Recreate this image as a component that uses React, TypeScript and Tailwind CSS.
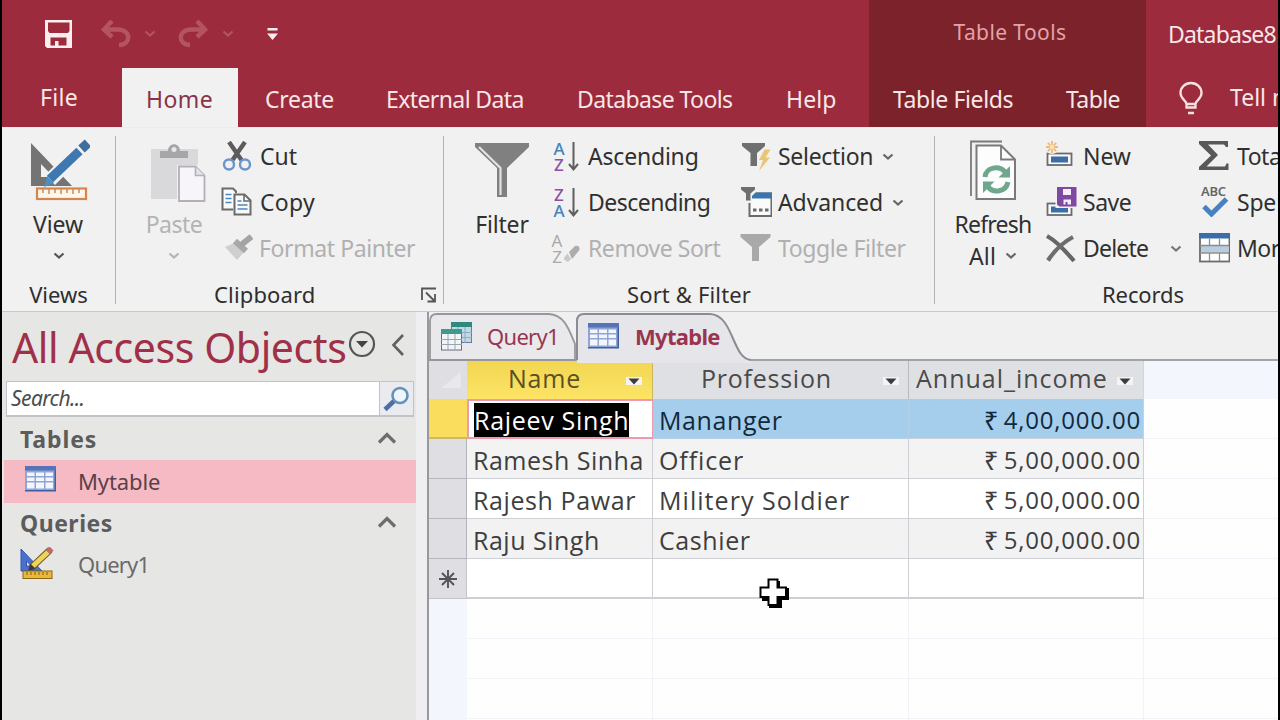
import type { ReactNode } from 'react';

/* ---------- small helpers ---------- */

function Chevron({ className = '' }: { className?: string }) {
  return (
    <svg className={`h-[8px] w-[12px] shrink-0 ${className}`} viewBox="0 0 12 8" fill="none" stroke="currentColor" strokeWidth="2.200">
      <path d="M1.500 1.500 6 5.500 10.500 1.500" />
    </svg>
  );
}

function Icon({ children, w = 32, h = 32 }: { children: ReactNode; w?: number; h?: number }) {
  return (
    <svg width={w} height={h} viewBox={`0 0 ${w} ${h}`} fill="none" className="shrink-0">
      {children}
    </svg>
  );
}

function Command({ icon, label, className = '', arrow }: { icon: ReactNode; label: string; className?: string; arrow?: string }) {
  return (
    <div className="flex h-[46px] items-center">
      {icon}
      <span className={`ml-[6px] pb-[2px] ${className}`}>{label}</span>
      {arrow && <Chevron className={arrow} />}
    </div>
  );
}

function Group({ width, children, footer }: { width: string; children: ReactNode; footer: ReactNode }) {
  return (
    <div className={`flex h-[183px] shrink-0 flex-col ${width}`}>
      <div className="flex h-[151px]">{children}</div>
      {footer}
    </div>
  );
}

const Separator = () => <div className="mt-[8px] h-[168px] w-px shrink-0 bg-[#b4b4b4]" />;

/* ---------- ribbon icons ---------- */

const ViewIcon = () => (
  <Icon w={62} h={62}>
    <path fillRule="evenodd" d="M3 4 44 47H3ZM13 25V38H25.500Z" fill="#747474" />
    <path d="M57 6 22 41" stroke="#f1f1f1" strokeWidth="14" />
    <path d="M51.500 12 22 40" stroke="#3d78b0" strokeWidth="9" />
    <path d="M60 4 53.500 10" stroke="#3d6e9c" strokeWidth="9.500" />
    <path d="M19 37 26 44 16 48Z" fill="#4f8cc0" />
    <rect x="9" y="49.500" width="49" height="10.500" fill="#fff7ec" stroke="#d3864f" strokeWidth="2.200" />
    <path d="M15 50v4M21 50v5M27 50v4M33 50v5M39 50v4M45 50v5M51 50v4" stroke="#d3864f" strokeWidth="1.500" />
  </Icon>
);

const PasteIcon = () => (
  <Icon w={64} h={62}>
    <path d="M9 9H56V59H9Z" fill="#d9d9dc" />
    <path d="M18 11H26C26 2 38 2 38 11H46V18H18Z" fill="#a6a6a8" />
    <circle cx="32" cy="9.500" r="2.500" fill="#e8e8e8" />
    <path d="M35 25H55L65 35V62H35Z" fill="#f1f1f1" />
    <path d="M37 26.500H53.500L62.500 35.500V61H37Z" fill="#f7f4fa" stroke="#b3afb8" strokeWidth="1.800" />
    <path d="M53.500 26.500V35.500H62.500" fill="#e4e4e8" stroke="#b3afb8" strokeWidth="1.600" />
  </Icon>
);

const CutIcon = () => (
  <Icon>
    <path d="M8 1 20.500 19M24 1 11.500 19" stroke="#5c5c5c" strokeWidth="4.400" />
    <circle cx="8" cy="23.500" r="5" stroke="#6c93cc" strokeWidth="2.400" />
    <circle cx="24" cy="23.500" r="5" stroke="#6c93cc" strokeWidth="2.400" />
  </Icon>
);

const CopyIcon = () => (
  <Icon>
    <path d="M1.500 1.500H12L15 4.500V22.500H1.500Z" fill="#fafafa" stroke="#6b6b6b" strokeWidth="2" />
    <path d="M4.500 7.500h6M4.500 11.500h6M4.500 15.500h6" stroke="#4b86c4" strokeWidth="1.700" />
    <path d="M12 6H24L31 13V30H12Z" fill="#f1f1f1" />
    <path d="M13.500 7.500H23.500L29.500 13.500V27.500H13.500Z" fill="#fafafa" stroke="#6b6b6b" strokeWidth="2" />
    <path d="M23 7.500V14H29.500" stroke="#6b6b6b" strokeWidth="1.600" />
    <path d="M16.500 14h4M16.500 18h10M16.500 22h10" stroke="#4b86c4" strokeWidth="1.700" />
  </Icon>
);

const PainterIcon = () => (
  <Icon>
    <path d="M4 14 13 10 23 19 16 27Z" fill="#cfcfcf" />
    <path d="M14 8 25 18" stroke="#a8a8a8" strokeWidth="6" />
    <path d="M20 12 30.500 3.500" stroke="#a4a4a4" strokeWidth="6" />
  </Icon>
);

const FilterIcon = () => (
  <Icon w={56} h={58}>
    <path d="M1 2H55V6L33 27V56H23V27L1 6Z" fill="#808080" />
    <path d="M5 6 26.500 27V54" stroke="#e2e2e2" strokeWidth="2.200" />
  </Icon>
);

/* stacked letters beside a downward arrow */
function SortIcon({ top, bottom, a, b }: { top: string; bottom: string; a: string; b: string }) {
  return (
    <div className="flex h-8 w-8 shrink-0 pl-[2px]">
      <div className="flex w-[14px] flex-col items-center text-[17px] leading-[16px] font-medium">
        <span className={a}>{top}</span>
        <span className={b}>{bottom}</span>
      </div>
      <svg width="14" height="32" viewBox="0 0 14 32" fill="none" stroke="#5f5f5f" strokeWidth="2" className="ml-[1px]">
        <path d="M6.500 1V28M2 23 6.500 28.500 11 23" />
      </svg>
    </div>
  );
}

const RemoveSortIcon = () => (
  <div className="flex h-8 w-8 shrink-0 text-[#a9a9a9]">
    <div className="flex w-[14px] flex-col items-center text-[17px] leading-[16px]">
      <span>A</span>
      <span>Z</span>
    </div>
    <svg width="18" height="32" viewBox="0 0 18 32">
      <path d="M5 19 11 13Q16 12 15.500 17L8 26Z" fill="#adadad" />
      <path d="M3.500 20.500 7 26 4 29 -1 26Z" fill="#c9c9c9" />
    </svg>
  </div>
);

const SelectionIcon = () => (
  <Icon>
    <path d="M2 2H25V5L17 12V25H10.500V12L2 5Z" fill="#6f6f6f" />
    <path d="M24 7H31L27.500 15H32L19 32 22.500 20H18Z" fill="#f1f1f1" />
    <path d="M24.500 8.500H30.500L25.500 16.500H30L19 30 23 19H19Z" fill="#ebc672" />
  </Icon>
);

const AdvancedIcon = () => (
  <Icon>
    <rect x="9.500" y="6.500" width="22" height="22.500" fill="#fafafa" stroke="#6b6b6b" strokeWidth="2" />
    <rect x="11" y="5.500" width="21" height="6" fill="#3a75ab" />
    <path d="M1 0H16V5L12 9V16H6V9L1 5Z" fill="#f1f1f1" />
    <path d="M1 0H15V2.500L10.500 6.500V13.500H6V6.500L1 2.500Z" fill="#6f6f6f" />
    <path d="M13 23h3.500M19 23h3.500M25 23h3.500" stroke="#6b6b6b" strokeWidth="3" />
  </Icon>
);

const ToggleIcon = () => (
  <Icon>
    <path d="M0.500 1H30.500V4L19 14V28H12V14L0.500 4Z" fill="#a9a9a9" />
  </Icon>
);

const RefreshIcon = () => (
  <Icon w={48} h={62}>
    <path d="M2 57V2.500H33" stroke="#7a7a7a" strokeWidth="1.800" />
    <path d="M7.500 6.500H32L46 20.500V60H7.500Z" fill="#fdfdfd" stroke="#7a7a7a" strokeWidth="2" />
    <path d="M32 6.500V20.500H46" stroke="#7a7a7a" strokeWidth="1.800" />
    <path d="M16 38C17 28 30 26 36 33" stroke="#6da78c" strokeWidth="5" />
    <path d="M41 27V38.500H29.500Z" fill="#6da78c" />
    <path d="M39 43C37 53 24 55 19 47.500" stroke="#6da78c" strokeWidth="5" />
    <path d="M14 54V42.500H25.500Z" fill="#6da78c" />
  </Icon>
);

const NewIcon = () => (
  <Icon>
    <rect x="2.500" y="12.500" width="24" height="11.500" fill="#fafafa" stroke="#6b6b6b" strokeWidth="1.800" />
    <rect x="6" y="15.500" width="17" height="6" fill="#3a6ea6" />
    <circle cx="7" cy="6" r="7" fill="#f1f1f1" />
    <path d="M7 0V12M1 6H13M2.800 1.800 11.200 10.200M11.200 1.800 2.800 10.200" stroke="#efb877" strokeWidth="1.800" />
    <circle cx="7" cy="6" r="2.400" fill="#f7e0b8" />
  </Icon>
);

const SaveIcon = () => (
  <Icon>
    <rect x="2.500" y="16.500" width="24" height="11.500" fill="#fafafa" stroke="#6b6b6b" strokeWidth="1.800" />
    <rect x="6" y="19.500" width="17" height="6" fill="#3a6ea6" />
    <path d="M10.500 0H32V21H10.500Z" fill="#f1f1f1" />
    <path d="M12 0H31.500V19.500H14.500L12 17.500Z" fill="#7e48a3" />
    <rect x="18" y="2" width="8" height="6" fill="#f4eef8" />
    <path d="M18.500 12.500H26V17.500H22.500V15H20.500V17.500H18.500Z" fill="#f4eef8" />
  </Icon>
);

const DeleteIcon = () => (
  <Icon>
    <path d="M2 3Q13 9 29 28" stroke="#666" strokeWidth="4.200" />
    <path d="M28 4Q13 12 3 27.500" stroke="#6d6d6d" strokeWidth="4.200" />
  </Icon>
);

const SigmaIcon = () => (
  <Icon>
    <path d="M1 0H30V6H28L26 3.500H10L20 14 8.500 25.500H27L28.500 22.500H30.500V29H1V26L13 14.500 1 3Z" fill="#585858" />
  </Icon>
);

const SpellIcon = () => (
  <div className="flex h-8 w-8 shrink-0 flex-col">
    <span className="pl-[3px] text-[13px] leading-[9px] font-semibold tracking-[-0.3px] text-[#666]">ABC</span>
    <svg width="32" height="21" viewBox="0 0 32 21" fill="none">
      <path d="M6 10.500 13.500 18 28.500 3" stroke="#4781bf" strokeWidth="5" />
    </svg>
  </div>
);

const MoreIcon = () => (
  <Icon>
    <rect x="2" y="1" width="29.500" height="27.500" fill="#fff" stroke="#6b6b6b" strokeWidth="1.800" />
    <rect x="1" y="0" width="31.500" height="5.500" fill="#3a6ea6" />
    <rect x="3" y="13" width="27.500" height="6.500" fill="#b8cde0" />
    <path d="M11.500 6V13M21.500 6V13M11.500 20V28M21.500 20V28M2 12.500H31M2 20H31" stroke="#8d8d8d" strokeWidth="1.300" />
  </Icon>
);

/* ---------- object icons ---------- */

const TableIcon = () => (
  <svg width="34" height="28" viewBox="0 0 34 28" fill="none" className="shrink-0">
    <rect x="1" y="1" width="31" height="25.500" fill="#3f5fa3" />
    <rect x="1" y="1" width="29.500" height="24" fill="#8fa5d6" />
    <rect x="1" y="1" width="31" height="4.500" fill="#5673b8" />
    <path d="M3 7.500h7.500v3.500H3zM12 7.500h8v3.500h-8zM21.500 7.500h7.500v3.500h-7.500zM3 12.500h7.500v3.500H3zM12 12.500h8v3.500h-8zM21.500 12.500h7.500v3.500h-7.500zM3 17.500h7.500v6H3zM12 17.500h8v6h-8zM21.500 17.500h7.500v6h-7.500z" fill="#f3f6fd" />
  </svg>
);

const QueryObjectIcon = () => (
  <svg width="34" height="34" viewBox="0 0 34 34" fill="none" className="shrink-0">
    <path fillRule="evenodd" d="M1 2 22 24H1ZM6.500 14V19H11.500Z" fill="#4a70cf" stroke="#3555ad" />
    <path d="M30 3 12 20" stroke="#6f5b23" strokeWidth="7" />
    <path d="M28 5 13 19" stroke="#f0d35a" strokeWidth="5" />
    <path d="M31.500 1.500 28 5" stroke="#c4686f" strokeWidth="6" />
    <path d="M10 17 15.500 22 8 24Z" fill="#3c3c3c" />
    <rect x="3" y="24" width="29" height="7.500" fill="#e9b93c" stroke="#8e6716" />
    <path d="M7 25v3M11 25v3M15 25v3M19 25v3M23 25v3M27 25v3" stroke="#7d5a14" />
  </svg>
);

const QueryTabIcon = () => (
  <svg width="34" height="32" viewBox="0 0 34 32" fill="none" className="shrink-0">
    <rect x="10.500" y="2.500" width="20" height="20" fill="#c4d7e4" stroke="#5d7fa0" />
    <rect x="10" y="2" width="21" height="5" fill="#2e8a80" />
    <path d="M10 12.500H31M10 17.500H31M17 7V23M24 7V23" stroke="#8fabc2" />
    <rect x="0.500" y="9.500" width="20" height="20.500" fill="#f1f5f7" stroke="#666e78" />
    <rect x="0" y="9" width="21" height="5" fill="#3c9a8e" />
    <path d="M0 19.500H21M0 24.500H21M7 14V30M14 14V30" stroke="#9aa4ae" />
  </svg>
);

/* ---------- header ---------- */

function Header() {
  return (
    <header className="flex h-[127px] shrink-0 bg-[#9b2b3d] text-[23px] leading-[32px] text-[#fbe6e6]">
      <div className="w-[867px] shrink-0">
        <div className="flex h-[68px] items-center">
          <svg className="ml-[42px]" width="29" height="30" viewBox="0 0 29 30">
            <path fillRule="evenodd" d="M1 1H28V29H3L1 27ZM4 3.500V12L5.500 14H24L25.500 12V3.500ZM6.500 18.500V26.500H11V22H14.500V26.500H22.500V18.500Z" fill="#fdeeee" />
          </svg>
          <svg className="ml-[28px]" width="30" height="28" viewBox="0 0 30 28" fill="none" stroke="#b45463" strokeWidth="4.500">
            <path d="M11 1 3 9.500 11 17M4 9.500H17C31 10 30 25 18 25" />
          </svg>
          <Chevron className="ml-[13px] text-[#b45463]" />
          <svg className="ml-[22px]" width="30" height="28" viewBox="0 0 30 28" fill="none" stroke="#b45463" strokeWidth="4.500">
            <path d="M19 1 27 9.500 19 17M26 9.500H13C-1 10 0 25 12 25" />
          </svg>
          <Chevron className="ml-[14px] text-[#b45463]" />
          <svg className="ml-[32px]" width="14" height="14" viewBox="0 0 14 14" fill="#fdeeee">
            <path d="M1.500 1H11.500V3.500H1.500ZM1 6.500H12L6.500 13Z" />
          </svg>
        </div>
        <nav className="flex h-[59px] items-center whitespace-nowrap">
          <div className="w-[120px] pb-px pl-[38px] tracking-[0.3px]">File</div>
          <div className="flex h-full w-[116px] items-center bg-[#f1f1f1] pt-[2px] pl-[24px] tracking-[0.4px] text-[#8a3248]">Home</div>
          <div className="w-[147px] pt-[2px] pl-[27px] tracking-[-0.3px]">Create</div>
          <div className="w-[191px] pt-[2px] pl-[1px] tracking-[-0.6px]">External Data</div>
          <div className="w-[208px] pt-[2px] pl-[1px] tracking-[-0.6px]">Database Tools</div>
          <div className="pt-[2px] pl-[2px] tracking-[0.1px]">Help</div>
        </nav>
      </div>
      <div className="w-[277px] shrink-0 bg-[#7b222b] whitespace-nowrap">
        <div className="flex h-[68px] items-center justify-center pb-[4px] pl-[5px] text-[21px] tracking-[0.4px] text-[#e3a2a7]">Table Tools</div>
        <div className="flex h-[59px] items-center pt-[2px] pl-[24px]">
          <div className="w-[173px] tracking-[-0.4px]">Table Fields</div>
          <div className="tracking-[-0.6px]">Table</div>
        </div>
      </div>
      <div className="min-w-0 grow overflow-hidden whitespace-nowrap">
        <div className="flex h-[68px] items-center pl-[22px] tracking-[-0.8px]">Database8</div>
        <div className="flex h-[59px] items-center pl-[33px]">
          <svg className="shrink-0" width="24" height="34" viewBox="0 0 24 34" fill="none" stroke="#fbe0e0" strokeWidth="2.300">
            <path d="M7.500 26.500V23C7 19 1.500 18 1.500 12A10.500 10 0 0 1 22.500 12C22.500 18 17 19 16.500 23V26.500ZM7.500 23H16.500M9 32H15" />
          </svg>
          <span className="ml-[27px] pb-[2px]">Tell me</span>
        </div>
      </div>
    </header>
  );
}

/* ---------- ribbon ---------- */

function Ribbon() {
  const label = 'flex h-8 items-center justify-center pb-[2px] text-[22px] text-[#2e2e2e]';
  return (
    <section className="flex h-[185px] shrink-0 overflow-hidden border-t border-b border-t-[#f6e8e9] border-b-[#cacaca] bg-[#f1f1f1] text-[23px] leading-[30px] whitespace-nowrap text-[#303030]">
      <Group width="w-[113px]" footer={<div className={label}>Views</div>}>
        <div className="flex w-full flex-col items-center pt-[11px]">
          <ViewIcon />
          <div className="mt-[8px] pr-[1px] tracking-[-0.1px]">View</div>
          <Chevron className="mt-[13px] text-[#555]" />
        </div>
      </Group>
      <Separator />
      <Group
        width="w-[327px]"
        footer={
          <div className="flex h-8 items-center text-[22px] text-[#2e2e2e]">
            <span className="ml-[98px] pb-[2px] tracking-[0.15px]">Clipboard</span>
            <svg className="mr-[5px] ml-auto" width="18" height="18" viewBox="0 0 18 18" fill="none" stroke="#555" strokeWidth="1.800">
              <path d="M2 14V2.500H16M6 6.500 14 14.500M15 8V15.500H7.500" />
            </svg>
          </div>
        }
      >
        <div className="ml-[26px] flex w-[64px] flex-col items-center pt-[12px] text-[#b4b4b4]">
          <PasteIcon />
          <div className="mt-[7px] tracking-[-0.5px]">Paste</div>
          <Chevron className="mt-[13px]" />
        </div>
        <div className="ml-[15px] pt-[6px]">
          <Command icon={<CutIcon />} label="Cut" className="pl-[1px]" />
          <Command icon={<CopyIcon />} label="Copy" className="pl-[1px] tracking-[0.3px]" />
          <Command icon={<PainterIcon />} label="Format Painter" className="tracking-[-0.4px] text-[#b0b0b0]" />
        </div>
      </Group>
      <Separator />
      <Group width="w-[490px]" footer={<div className={`${label} tracking-[0.15px]`}>Sort &amp; Filter</div>}>
        <div className="ml-[26px] flex w-[64px] flex-col items-center pt-[13px]">
          <FilterIcon />
          <div className="mt-[10px] tracking-[-0.2px]">Filter</div>
        </div>
        <div className="ml-[16px] w-[190px] pt-[6px]">
          <Command icon={<SortIcon top="A" bottom="Z" a="text-[#4583bd]" b="text-[#8a50a8]" />} label="Ascending" className="tracking-[-0.2px]" />
          <Command icon={<SortIcon top="Z" bottom="A" a="text-[#8a50a8]" b="text-[#4583bd]" />} label="Descending" className="tracking-[-0.5px]" />
          <Command icon={<RemoveSortIcon />} label="Remove Sort" className="tracking-[-0.45px] text-[#b0b0b0]" />
        </div>
        <div className="pt-[6px]">
          <Command icon={<SelectionIcon />} label="Selection" className="tracking-[-0.3px]" arrow="ml-[9px] text-[#666]" />
          <Command icon={<AdvancedIcon />} label="Advanced" className="tracking-[-0.1px]" arrow="ml-[9px] text-[#666]" />
          <Command icon={<ToggleIcon />} label="Toggle Filter" className="tracking-[-0.4px] text-[#b0b0b0]" />
        </div>
      </Group>
      <Separator />
      <Group width="w-[416px]" footer={<div className={`${label} tracking-[-0.1px]`}>Records</div>}>
        <div className="ml-[16px] flex w-[84px] flex-col items-center pt-[11px]">
          <RefreshIcon />
          <div className="mt-[8px] tracking-[-0.8px]">Refresh</div>
          <div className="mt-[2px] flex items-center tracking-[0.1px]">
            All
            <Chevron className="ml-[9px] text-[#666]" />
          </div>
        </div>
        <div className="ml-[10px] w-[153px] pt-[6px]">
          <Command icon={<NewIcon />} label="New" className="tracking-[-0.1px]" />
          <Command icon={<SaveIcon />} label="Save" className="tracking-[-0.5px]" />
          <Command icon={<DeleteIcon />} label="Delete" className="tracking-[-0.8px]" arrow="ml-[22px] text-[#777]" />
        </div>
        <div className="pt-[6px]">
          <Command icon={<SigmaIcon />} label="Totals" className="pl-[1px] tracking-[-0.5px]" />
          <Command icon={<SpellIcon />} label="Spelling" className="pl-[1px] tracking-[-0.2px]" />
          <Command icon={<MoreIcon />} label="More" className="pl-[1px] tracking-[-0.5px]" />
        </div>
      </Group>
    </section>
  );
}

/* ---------- navigation pane ---------- */

function CollapseMark() {
  return (
    <svg className="mr-[19px] mb-[2px] ml-auto" width="20" height="14" viewBox="0 0 20 14" fill="none" stroke="#6d6d6d" strokeWidth="3.200">
      <path d="M2 11.500 10 3.500 18 11.500" />
    </svg>
  );
}

function NavPane() {
  return (
    <aside className="w-[414px] shrink-0 bg-[#e6e6e5] text-[22px] leading-[30px] whitespace-nowrap text-[#5c5c5c]">
      <div className="flex h-[69px] items-center pl-[10px]">
        <h1 className="w-[336px] text-[41px] leading-[56px] tracking-[-0.4px] text-[#a03048]">All Access Objects</h1>
        <svg className="mb-[6px] shrink-0" width="28" height="28" viewBox="0 0 28 28" fill="none">
          <circle cx="14" cy="14" r="12" stroke="#555" strokeWidth="2.200" />
          <path d="M8 11H20L14 17.500Z" fill="#444" />
        </svg>
        <svg className="mb-[4px] ml-[15px] shrink-0" width="14" height="24" viewBox="0 0 14 24" fill="none" stroke="#606060" strokeWidth="2.600">
          <path d="M12 2 2.500 12 12 22" />
        </svg>
      </div>
      <div className="ml-[4px] flex h-[36px] w-[408px] border border-b-2 border-[#c0c3c8] bg-white">
        <div className="flex grow items-center pb-[2px] pl-[4px] text-[21px] tracking-[-0.6px] text-[#4c4c4c] italic">Search...</div>
        <div className="flex w-[34px] items-center justify-center border-l border-[#c0c3c8] bg-[#eaebef]">
          <svg width="27" height="26" viewBox="0 0 27 26" fill="none">
            <path d="M2 23.500 11 15" stroke="#4e6fa6" strokeWidth="4.500" />
            <circle cx="17" cy="9.500" r="7.500" fill="#eef6fd" stroke="#6591bd" strokeWidth="2.600" />
          </svg>
        </div>
      </div>
      <div className="flex h-[43px] items-center pl-[18px] text-[23px] font-bold tracking-[0.9px]">
        Tables
        <CollapseMark />
      </div>
      <div className="ml-[2px] flex h-[43px] items-center bg-[#f6bac5] pl-[20px] text-[#5b4048]">
        <span className="mb-[5px]"><TableIcon /></span>
        <span className="ml-[20px] pb-[2px] tracking-[-0.1px]">Mytable</span>
      </div>
      <div className="flex h-[40px] items-center pl-[18px] text-[23px] font-bold tracking-[0.5px]">
        Queries
        <CollapseMark />
      </div>
      <div className="flex h-[44px] items-center pb-[3px] pl-[18px] text-[#6a6a6a]">
        <QueryObjectIcon />
        <span className="ml-[24px] tracking-[-0.8px]">Query1</span>
      </div>
    </aside>
  );
}

/* ---------- datasheet ---------- */

function TabStrip() {
  return (
    <div className="flex h-[49px] border-b-2 border-[#a2a4a8] bg-[#f0f0f0] text-[22px] leading-[30px] whitespace-nowrap text-[#9a3550]">
      <div className="relative flex w-[147px] items-center pl-[12px]">
        <svg className="absolute top-0 left-0" width="147" height="49" viewBox="0 0 147 49" fill="none">
          <path d="M1 48V9Q1 2 8 2H120C136 3 140 18 146 32V48Z" fill="#e9e9eb" stroke="#96979b" strokeWidth="1.800" />
        </svg>
        <div className="relative flex items-center">
          <QueryTabIcon />
          <span className="ml-[12px] tracking-[-0.7px]">Query1</span>
        </div>
      </div>
      <div className="relative flex w-[176px] items-center pl-[11px]">
        <svg className="absolute top-0 left-0" width="176" height="51" viewBox="0 0 176 51" fill="none">
          <path d="M1 51V9Q1 2 8 2H134C158 3 156 47 175 48V51Z" fill="#e6e6ea" />
          <path d="M1 48V9Q1 2 8 2H134C158 3 156 47 175 48" stroke="#8b8c91" strokeWidth="2" />
        </svg>
        <div className="relative flex items-center">
          <TableIcon />
          <span className="ml-[14px] font-bold tracking-[-0.7px]">Mytable</span>
        </div>
      </div>
    </div>
  );
}

function DropArrow({ className = '' }: { className?: string }) {
  return (
    <span className={`flex h-[8px] w-[16px] shrink-0 items-center justify-center bg-[#f4f4f6] ${className}`}>
      <svg width="12" height="7" viewBox="0 0 12 7"><path d="M0.500 0.500H11.500L6 6.500Z" fill="#3c3c3c" /></svg>
    </span>
  );
}

const rows = [
  { name: 'Ramesh Sinha', ns: 'tracking-[0.5px]', job: 'Officer', js: 'tracking-[0.9px]', pay: '5,00,000.00', bg: 'bg-[#f3f3f4]' },
  { name: 'Rajesh Pawar', ns: 'tracking-[0.6px]', job: 'Militery Soldier', js: 'tracking-[1.05px]', pay: '5,00,000.00', bg: 'bg-white' },
  { name: 'Raju Singh', ns: 'tracking-[0.5px]', job: 'Cashier', js: 'tracking-[0.6px]', pay: '5,00,000.00', bg: 'bg-[#f2f2f3]' },
];

const cols = 'grid shrink-0 grid-cols-[38px_186px_256px_235px_1fr]';

function Amount({ value, className = '' }: { value: string; className?: string }) {
  return (
    <div className={`flex items-center justify-end border-r border-[#cfd0d6] pt-[3px] pr-[2px] text-[24px] ${className}`}>
      <span className="mr-[5px] text-[26px]">₹</span>
      <span className="tracking-[0.8px]">{value}</span>
    </div>
  );
}

const edge = 'border-b border-[#f1f3f8]';
const cell = 'flex items-center border-r border-b border-[#cfd0d6] pt-[2px] pl-[6px]';

function Datasheet() {
  return (
    <main className="relative flex min-w-0 grow flex-col overflow-hidden border-l-2 border-[#98999d] bg-[#fefefe] font-['Open_Sans','Noto_Sans',sans-serif] text-[25px] leading-[34px] whitespace-nowrap text-[#3e3e3e]">
      <div className="font-['Noto_Sans',sans-serif]">
        <TabStrip />
      </div>
      <div className={`${cols} h-[38px] text-[#4a4a4a]`}>
        <div className="flex items-end justify-end bg-[#dfdfe3] pr-[6px] pb-[11px]">
          <svg width="20" height="16" viewBox="0 0 22 18"><path d="M22 0V18H0Z" fill="#e9e9ec" /></svg>
        </div>
        <div className="flex items-center border-r border-[#c9b65e] bg-linear-to-b from-[#f2d653] to-[#fde465] pl-[41px] text-[#5a5122]">
          <span className="pb-[4px] tracking-[0.8px]">Name</span>
          <DropArrow className="mt-[2px] mr-[10px] ml-auto" />
        </div>
        <div className="flex items-center border-r border-[#b9bac0] bg-[#dfe0e4] pl-[48px]">
          <span className="pb-[4px] tracking-[0.75px]">Profession</span>
          <DropArrow className="mt-[2px] mr-[9px] ml-auto" />
        </div>
        <div className="flex items-center border-r border-[#d4d5da] bg-[#dfe0e4] pl-[7px]">
          <span className="pb-[4px] tracking-[1px]">Annual_income</span>
          <DropArrow className="mt-[2px] mr-[10px] ml-auto" />
        </div>
        <div className="bg-[#f3f6fd]" />
      </div>
      <div className={`${cols} h-[40px] text-[#12293c]`}>
        <div className="border-b-2 border-[#cbb96a] bg-[#fbdd5e]" />
        <div className="mr-[-1px] flex items-center border-2 border-[#ee9aae] bg-white pl-[5px]">
          <span className="mt-[2px] h-[34px] bg-black tracking-[0.7px] text-white">Rajeev Singh</span>
        </div>
        <div className="flex items-center border-r border-b border-[#b7cfe2] bg-[#a5ceed] pt-[3px] pl-[6px] tracking-[0.6px]">Mananger</div>
        <Amount value="4,00,000.00" className="border-b bg-[#a5ceed]" />
        <div className={edge} />
      </div>
      {rows.map((r) => (
        <div key={r.name} className={`${cols} h-[40px]`}>
          <div className="border-r border-b border-[#b4b4ba] bg-[#dfdfe3]" />
          <div className={`${cell} ${r.bg} ${r.ns}`}>{r.name}</div>
          <div className={`${cell} ${r.bg} ${r.js}`}>{r.job}</div>
          <Amount value={r.pay} className={`border-b ${r.bg}`} />
          <div className={edge} />
        </div>
      ))}
      <div className={`${cols} h-[40px]`}>
        <div className="flex items-center justify-center border-r border-b border-[#c4c4ca] bg-[#dfdfe3]">
          <svg width="20" height="20" viewBox="0 0 20 20" stroke="#555" strokeWidth="1.900">
            <path d="M10 1V19M1 10H19M4 4 16 16M16 4 4 16" />
          </svg>
        </div>
        <div className={`${cell} border-b-2 bg-white`} />
        <div className={`${cell} border-b-2 bg-white`} />
        <div className={`${cell} border-b-2 bg-white`} />
        <div className={edge} />
      </div>
      {[0, 1, 2, 3].map((i) => (
        <div key={i} className={`${cols} h-[40px]`}>
          <div className="bg-[#f3f6fd]" />
          <div className={`${edge} border-r`} />
          <div className={`${edge} border-r`} />
          <div className={`${edge} border-r`} />
          <div className={edge} />
        </div>
      ))}
      <svg className="absolute top-[265px] left-[328px]" width="32" height="32" viewBox="0 0 32 32">
        <path d="M12 4H23V11H32V23H25V31H12V24H5V11H12Z" fill="#000" />
        <path d="M11.500 2.500H20.500V10.500H29V20H20.500V28H11.500V20H3.500V10.500H11.500Z" fill="#fff" stroke="#000" strokeWidth="2" />
      </svg>
    </main>
  );
}

export default function App() {
  return (
    <div className="flex h-[720px] w-[1280px] flex-col overflow-hidden border-x-2 border-black bg-[#f0f0f0] font-['Noto_Sans',sans-serif]">
      <Header />
      <Ribbon />
      <div className="flex min-h-0 grow">
        <NavPane />
        <div className="w-[11px] shrink-0 bg-[#efeff1]" />
        <Datasheet />
      </div>
    </div>
  );
}
